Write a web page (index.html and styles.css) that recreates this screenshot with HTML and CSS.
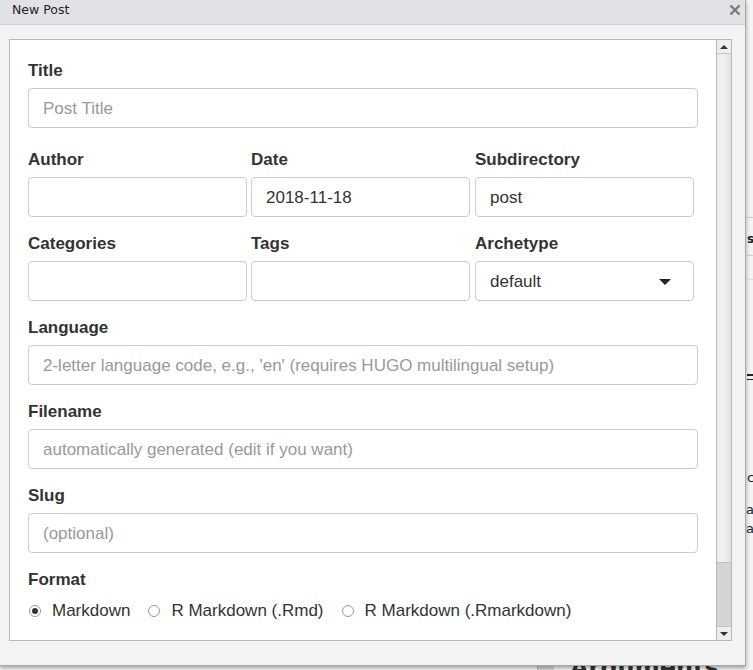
FILE: index.html
```html
<!DOCTYPE html>
<html>
<head>
<meta charset="utf-8">
<link rel="stylesheet" href="styles.css">
</head>
<body>
<div class="page">
  <div class="bg-frag frag-line1"></div>
  <div class="bg-frag frag-s">s</div>
  <div class="bg-frag frag-line2"></div>
  <div class="bg-frag frag-line3"></div>
  <div class="bg-frag frag-eq"></div>
  <div class="bg-frag frag-c">c</div>
  <div class="bg-frag frag-a1">a</div>
  <div class="bg-frag frag-a2">a</div>
  <div class="bg-frag frag-bar"></div>
  <div class="bg-frag frag-args">Arguments</div>

  <div class="dialog">
    <div class="titlebar">
      <span class="title">New Post</span>
      <svg class="close" width="12" height="12" viewBox="0 0 12 12"><path d="M1.5 1.5L10.5 10.5M10.5 1.5L1.5 10.5" stroke="#7a7a7a" stroke-width="2.4" stroke-linecap="butt"/></svg>
    </div>
    <div class="dialog-body">
      <div class="frame">
        <div class="content">
          <div class="group group-title">
            <label>Title</label>
            <div class="input placeholder">Post Title</div>
          </div>
          <div class="row">
            <div class="col">
              <label>Author</label>
              <div class="input"></div>
            </div>
            <div class="col">
              <label>Date</label>
              <div class="input">2018-11-18</div>
            </div>
            <div class="col">
              <label>Subdirectory</label>
              <div class="input">post</div>
            </div>
          </div>
          <div class="row">
            <div class="col">
              <label>Categories</label>
              <div class="input"></div>
            </div>
            <div class="col">
              <label>Tags</label>
              <div class="input"></div>
            </div>
            <div class="col">
              <label>Archetype</label>
              <div class="input select"><span>default</span><span class="caret"></span></div>
            </div>
          </div>
          <div class="group">
            <label>Language</label>
            <div class="input placeholder">2-letter language code, e.g., 'en' (requires HUGO multilingual setup)</div>
          </div>
          <div class="group">
            <label>Filename</label>
            <div class="input placeholder">automatically generated (edit if you want)</div>
          </div>
          <div class="group">
            <label>Slug</label>
            <div class="input placeholder">(optional)</div>
          </div>
          <div class="group">
            <label>Format</label>
            <div class="radios">
              <div class="option"><span class="radio checked"></span>Markdown</div>
              <div class="option"><span class="radio"></span>R Markdown (.Rmd)</div>
              <div class="option"><span class="radio"></span>R Markdown (.Rmarkdown)</div>
            </div>
          </div>
        </div>
        <div class="scrollbar">
          <div class="sb-btn"><span class="arrow-up"></span></div>
          <div class="sb-thumb"></div>
          <div class="sb-track"></div>
          <div class="sb-btn sb-btn-down"><span class="arrow-down"></span></div>
        </div>
      </div>
    </div>
  </div>
</div>
</body>
</html>
```

FILE: styles.css
```css
html, body {
  margin: 0;
  padding: 0;
}
body {
  width: 753px;
  height: 670px;
  overflow: hidden;
  background: #f3f4f3;
  font-family: "Liberation Sans", Arial, sans-serif;
  color: #333;
}
.page {
  position: relative;
  width: 753px;
  height: 670px;
}
.bg-frag {
  position: absolute;
  color: #222;
  font-family: "DejaVu Sans", sans-serif;
}
.frag-line1 { left: 747px; top: 217px; width: 6px; height: 1px; background: #ccc; }
.frag-s { left: 747px; top: 232px; font-size: 12px; font-weight: bold; }
.frag-line2 { left: 747px; top: 255px; width: 6px; height: 1px; background: #ccc; }
.frag-line3 { left: 747px; top: 279px; width: 6px; height: 1px; background: #ddd; }
.frag-eq { left: 747px; top: 374px; width: 6px; height: 3px; border-top: 2px solid #222; border-bottom: 1px solid #222; }
.frag-c { left: 747px; top: 470px; font-size: 13px; }
.frag-a1 { left: 746px; top: 502px; font-size: 13px; }
.frag-a2 { left: 746px; top: 521px; font-size: 13px; }
.frag-bar { left: 537px; top: 666px; width: 16px; height: 4px; background: #d6d6d6; border-left: 1px solid #bbb; }
.frag-args { left: 570px; top: 654px; font-size: 24px; font-weight: bold; color: #333; }

.dialog {
  position: absolute;
  left: 0;
  top: 0;
  width: 746px;
  height: 666px;
  border-right: 1px solid #a9a9a9;
  border-bottom: 1px solid #a9a9a9;
  box-sizing: border-box;
  background: #f2f3f2;
  display: flex;
  flex-direction: column;
  box-shadow: 0 2px 4px rgba(0,0,0,0.35);
}
.titlebar {
  height: 24px;
  background: #e1e2e6;
  border-bottom: 1px solid #cfd0d3;
  display: flex;
  align-items: center;
  justify-content: space-between;
  padding: 0 4px 0 12px;
  flex: none;
}
.title {
  font-family: "DejaVu Sans", sans-serif;
  font-size: 12.5px;
  color: #222;
  position: relative;
  top: -3px;
}
.close {
  position: relative;
  top: -2px;
}
.dialog-body {
  flex: 1;
  padding: 14px 0 0 9px;
}
.frame {
  width: 723px;
  height: 602px;
  box-sizing: border-box;
  border: 1px solid #b9b9b9;
  background: #fff;
  display: flex;
}
.content {
  flex: 1;
  overflow: hidden;
  padding: 20px 18px 0 18px;
}
label {
  display: block;
  font-size: 17px;
  font-weight: bold;
  line-height: 20px;
  padding-top: 1px;
  margin: 0 0 7px 0;
  color: #333;
}
.input {
  height: 40px;
  box-sizing: border-box;
  border: 1px solid #ccc;
  border-radius: 4px;
  padding: 0 14px;
  font-size: 17px;
  line-height: 40px;
  color: #333;
  white-space: nowrap;
  overflow: hidden;
}
.placeholder {
  color: #999;
}
.group {
  margin-bottom: 16px;
}
.group-title {
  margin-bottom: 21px;
}
.row {
  display: grid;
  grid-template-columns: 223px 224px 223px;
  margin-bottom: 16px;
}
.col .input {
  width: 219px;
}
.select {
  display: flex;
  justify-content: space-between;
  align-items: center;
  line-height: normal;
  padding-top: 1px;
}
.caret {
  width: 0;
  height: 0;
  border-left: 6px solid transparent;
  border-right: 6px solid transparent;
  border-top: 6px solid #222;
  margin-right: 8px;
}
.radios {
  display: flex;
  gap: 18px;
  margin-top: 11px;
  font-size: 17px;
  line-height: 20px;
  padding-left: 1px;
}
.option {
  display: flex;
  align-items: center;
}
.radio {
  width: 12px;
  height: 12px;
  box-sizing: border-box;
  border: 1px solid #9a9a9a;
  border-radius: 50%;
  margin-right: 11px;
  display: flex;
  align-items: center;
  justify-content: center;
}
.radio.checked::after {
  content: "";
  width: 6px;
  height: 6px;
  border-radius: 50%;
  background: #333;
}
.scrollbar {
  width: 14px;
  border-left: 1px solid #b9b9b9;
  display: flex;
  flex-direction: column;
  flex: none;
}
.sb-btn {
  height: 13px;
  background: #efeeec;
  border-bottom: 1px solid #c4c4c4;
  display: flex;
  align-items: center;
  justify-content: center;
  flex: none;
}
.sb-btn-down {
  border-bottom: none;
  border-top: 1px solid #c4c4c4;
}
.arrow-up {
  width: 0; height: 0;
  border-left: 4px solid transparent;
  border-right: 4px solid transparent;
  border-bottom: 4px solid #333;
}
.arrow-down {
  width: 0; height: 0;
  border-left: 4px solid transparent;
  border-right: 4px solid transparent;
  border-top: 4px solid #333;
}
.sb-thumb {
  height: 508px;
  flex: none;
  background: linear-gradient(to right, #ebeae8, #f3f2f1 40%, #e2e1df);
  border-bottom: 1px solid #bdbdbd;
}
.sb-track {
  flex: 1;
  background: #d5d4d2;
}
```
